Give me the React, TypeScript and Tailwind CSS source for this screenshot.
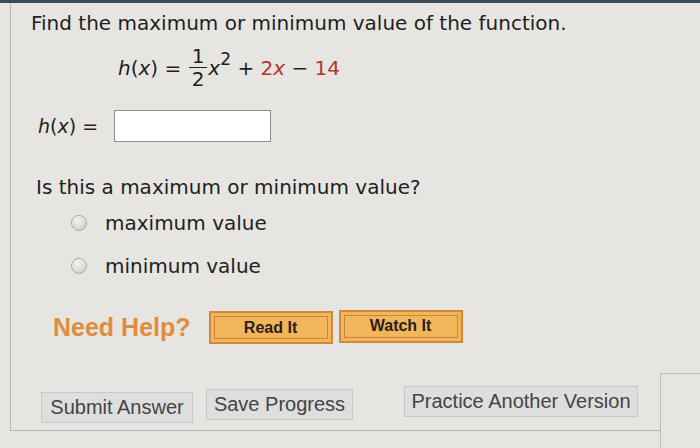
import React from 'react';

function Radio() {
    return (
        <span className="inline-block h-[16px] w-[16px] rounded-full border border-[#a9a9a9] bg-[radial-gradient(circle_at_40%_35%,#f4f4f4,#c4c4c4)] shadow-[inset_0_1px_1px_rgba(255,255,255,0.8)]" />
    );
}

function HelpButton({ label }: { label: string }) {
    return (
        <div className="border-2 border-[#d4883a] bg-[#f2b65a] p-[3px]">
            <div className="flex h-[23px] w-[114px] items-center justify-center border border-[#c9843e] text-[16px] font-bold text-[#2a2016] font-['Liberation_Sans',Arial,sans-serif]">
                {label}
            </div>
        </div>
    );
}

function GrayButton({ label, className }: { label: string; className?: string }) {
    return (
        <div
            className={`flex h-[31px] items-center justify-center border border-[#c8c8c8] bg-[#dedede] text-[20px] text-[#444] font-['Liberation_Sans',Arial,sans-serif] ${className ?? ''}`}
        >
            {label}
        </div>
    );
}

export default function App() {
    return (
        <div className="relative h-[448px] w-[700px] overflow-hidden bg-[#e6e5e1] font-['DejaVu_Sans',Verdana,sans-serif] text-[#1e1e1e]">
            {/* top strip */}
            <div className="h-[3px] w-full bg-[#3c4a58]" />

            {/* side box at lower right */}
            <div className="absolute left-[660px] top-[373px] h-[100px] w-[60px] border-l border-t border-[#bdbcb8]" />

            <div className="ml-[10px] mr-[40px] h-[428px] border-b border-l border-[#b9b8b4]">
                {/* Question */}
                <div className="pl-[20px] pt-[5px] text-[20px]">
                    Find the maximum or minimum value of the function.
                </div>

                {/* formula */}
                <div className="mt-[8px] flex items-center pl-[107px] text-[20px]">
                    <span className="italic">h</span>
                    <span>(</span>
                    <span className="italic">x</span>
                    <span>) =&nbsp;</span>
                    <span className="mx-[1px] inline-flex flex-col items-center text-[20px] leading-[20px]">
                        <span className="border-b border-[#1e1e1e] px-[3px] pb-[1px]">1</span>
                        <span className="px-[3px] pt-[1px]">2</span>
                    </span>
                    <span className="italic">x</span>
                    <span className="relative -top-[8px] text-[17px]">2</span>
                    <span>&nbsp;+&nbsp;</span>
                    <span className="text-[#b8332c]">2</span>
                    <span className="italic text-[#b8332c]">x</span>
                    <span>&nbsp;−&nbsp;</span>
                    <span className="text-[#b8332c]">14</span>
                </div>

                {/* answer */}
                <div className="mt-[21px] flex items-center pl-[27px] text-[19px]">
                    <span className="italic">h</span>
                    <span>(</span>
                    <span className="italic">x</span>
                    <span>) =</span>
                    <div className="ml-[16px] h-[32px] w-[157px] border border-[#8f8f8f] bg-white" />
                </div>

                {/* max/min */}
                <div className="mt-[30px] pl-[25px] text-[20px]">Is this a maximum or minimum value?</div>
                <div className="mt-[6px] flex flex-col gap-[13px] pl-[60px] text-[20px]">
                    <label className="flex items-center gap-[18px]">
                        <Radio />
                        <span>maximum value</span>
                    </label>
                    <label className="flex items-center gap-[18px]">
                        <Radio />
                        <span>minimum value</span>
                    </label>
                </div>

                {/* need help */}
                <div className="mt-[28px] flex items-center pl-[42px]">
                    <span className="mr-[18px] text-[25px] font-bold text-[#e18b3e] font-['Liberation_Sans',Arial,sans-serif]">
                        Need Help?
                    </span>
                    <HelpButton label="Read It" />
                    <div className="ml-[6px] -mt-[3px]">
                        <HelpButton label="Watch It" />
                    </div>
                </div>

                {/* actions */}
                <div className="mt-[39px] flex items-end pl-[30px]">
                    <GrayButton label="Submit Answer" className="w-[152px]" />
                    <GrayButton label="Save Progress" className="ml-[13px] mb-[3px] w-[147px]" />
                    <GrayButton label="Practice Another Version" className="ml-[51px] mb-[6px] w-[234px]" />
                </div>
            </div>
        </div>
    );
}
